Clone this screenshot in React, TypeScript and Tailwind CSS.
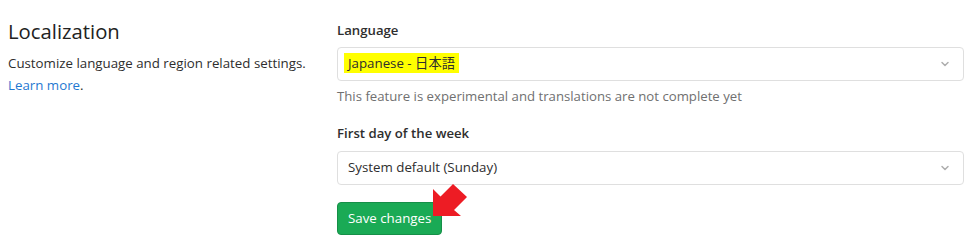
import { ChevronDown } from 'lucide-react';

function SelectBox({ children }: { children: React.ReactNode }) {
  return (
    <div className="flex h-[34px] items-center justify-between rounded-[4px] border border-[#dfdfdf] bg-white pl-[10px] pr-[12px]">
      <span className="text-[13.3px] text-[#2e2e2e]">{children}</span>
      <ChevronDown className="h-[12px] w-[12px] text-[#aeaeae]" strokeWidth={3} />
    </div>
  );
}

export default function App() {
  return (
    <div
      className="flex min-h-[245px] bg-white pt-[17px]"
      style={{ fontFamily: '"Open Sans", "Noto Sans CJK JP", sans-serif' }}
    >
      {/* left: section title */}
      <div className="w-[337px] shrink-0 pl-[8px]">
        <h4 className="text-[20.3px] font-medium leading-[28px] text-[#222222]">Localization</h4>
        <p className="mt-[7px] text-[13.3px] leading-[22px] text-[#2e2e2e]">
          Customize language and region related settings.
          <br />
          <a className="text-[#1f78d1]" href="#">Learn more</a>.
        </p>
      </div>

      {/* right: settings form */}
      <div className="flex-1 pr-[15px] pt-[4px]">
        <label className="block text-[13.2px] font-semibold leading-[18px] text-[#2e2e2e]">Language</label>
        <div className="mt-[8px]">
          <SelectBox>
            <span className="-ml-[4px] bg-[#ffff00] px-[4px] py-[1px]">Japanese - 日本語</span>
          </SelectBox>
        </div>
        <p className="mt-[5px] text-[13.2px] leading-[20px] text-[#707070]">
          This feature is experimental and translations are not complete yet
        </p>

        <label className="mt-[18px] block text-[13.2px] font-semibold leading-[18px] text-[#2e2e2e]">
          First day of the week
        </label>
        <div className="mt-[9px]">
          <SelectBox>System default (Sunday)</SelectBox>
        </div>

        <div className="relative mt-[17px] inline-block">
          <button className="h-[33px] rounded-[4px] border border-[#168f48] bg-[#1aaa55] px-[10px] text-[13.3px] text-white">
            Save changes
          </button>
          <svg
            className="pointer-events-none absolute left-[91px] top-[-22px]"
            width="45"
            height="40"
            viewBox="428 180 45 40"
          >
            <polygon
              points="433,216 433,189 440.5,196.5 453,184 467,197 454,210 461,216"
              fill="#ed1c24"
            />
          </svg>
        </div>
      </div>
    </div>
  );
}
